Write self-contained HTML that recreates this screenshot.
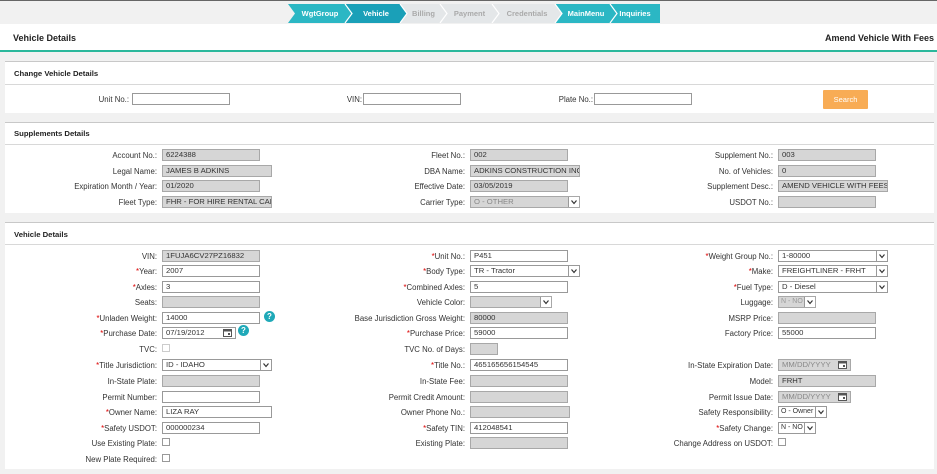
<!DOCTYPE html>
<html><head><meta charset="utf-8"><style>
*{box-sizing:border-box;margin:0;padding:0}
body{width:937px;height:474px;overflow:hidden;background:#f1f1f1;font-family:"Liberation Sans",sans-serif;font-size:8px;color:#333;position:relative}
.a{position:absolute}
.seg{position:absolute;top:4px;height:19px;line-height:19px;font-weight:bold;font-size:7.5px;color:#fff;text-align:center;clip-path:polygon(0 0,calc(100% - 7px) 0,100% 50%,calc(100% - 7px) 100%,0 100%,7px 50%)}
.g{background:#e4e7e9;color:#aaa}
.t{background:#2bb7c4}
.d{background:#1aa0b8}
.panel{position:absolute;left:5px;width:929px;background:#fff;border-top:1px solid #c8c8c8}
.hd{position:absolute;left:9px;font-weight:bold;font-size:7.7px;color:#222}
.sep{position:absolute;left:0;width:100%;height:1px;background:#d8d8d8}
.lb{position:absolute;text-align:right;white-space:nowrap;font-size:7.8px;color:#333}
.in{position:absolute;height:12px;border:1px solid #999;background:#fff;font-size:7.7px;line-height:10px;padding-left:3px;white-space:nowrap;overflow:hidden;color:#333}
.gr{background:#d6d6d6;border-color:#a8a8a8}
.sel{padding-right:11px}
.sel::after{content:"";position:absolute;right:0;top:0;width:10px;height:10px;border-left:1px solid #999;background:#fff}
.chev{position:absolute;right:2px;top:2px;width:6px;height:6px;z-index:2}
.r{color:#d00}
.cb{position:absolute;width:8px;height:8px;border:1px solid #999;background:#fff}
.q{position:absolute;width:11px;height:11px;border-radius:50%;background:#1fa9b8;color:#fff;font-weight:bold;font-size:8px;line-height:11px;text-align:center}
.cal{position:absolute;width:9px;height:9px}
</style></head><body>
<div class="a" style="left:0;top:0;width:937px;height:1px;background:#666"></div>
<div class="seg t" style="left:288px;width:64px">WgtGroup</div>
<div class="seg d" style="left:345px;width:62px">Vehicle</div>
<div class="seg g" style="left:400px;width:47px">Billing</div>
<div class="seg g" style="left:440px;width:59px">Payment</div>
<div class="seg g" style="left:492px;width:70px">Credentials</div>
<div class="seg t" style="left:555px;width:62px">MainMenu</div>
<div class="seg t" style="left:610px;width:50px;clip-path:polygon(0 0,100% 0,100% 100%,0 100%,7px 50%)">Inquiries</div>
<svg class="a" style="left:280px;top:4px" width="400" height="19"><g stroke="#fff" stroke-width="1.2" fill="none"><path d="M65 0L72 9.5L65 19"/><path d="M120 0L127 9.5L120 19"/><path d="M160 0L167 9.5L160 19"/><path d="M212 0L219 9.5L212 19"/><path d="M275 0L282 9.5L275 19"/><path d="M330 0L337 9.5L330 19"/></g></svg>
<div class="a" style="left:0;top:24px;width:937px;height:26px;background:#fff"></div>
<div class="a" style="left:13px;top:33px;font-weight:bold;font-size:9px;color:#222">Vehicle Details</div>
<div class="a" style="right:3px;top:33px;font-weight:bold;font-size:9px;color:#222">Amend Vehicle With Fees</div>
<div class="a" style="left:0;top:50px;width:937px;height:2px;background:#2bb89c"></div>

<div class="panel" style="top:61px;height:52px">
<div class="hd" style="top:7px">Change Vehicle Details</div>
<div class="sep" style="top:22px"></div>
<div class="lb" style="left:0;width:124px;top:33px">Unit No.:</div>
<div class="in" style="left:127px;top:31px;width:98px"></div>
<div class="lb" style="left:300px;width:57px;top:33px">VIN:</div>
<div class="in" style="left:358px;top:31px;width:98px"></div>
<div class="lb" style="left:500px;width:88px;top:33px">Plate No.:</div>
<div class="in" style="left:589px;top:31px;width:98px"></div>
<div class="a" style="left:818px;top:28px;width:45px;height:19px;background:#f8ac55;color:#fff;text-align:center;line-height:19px;font-size:7.5px;border-radius:1px">Search</div>
</div>

<div class="panel" style="top:122px;height:91px">
<div class="hd" style="top:6px">Supplements Details</div>
<div class="sep" style="top:21px"></div>
</div>
<div class="lb" style="left:0;width:157px;top:151px">Account No.:</div><div class="in gr" style="left:162px;top:149px;width:98px">6224388</div>
<div class="lb" style="left:0;width:157px;top:167px">Legal Name:</div><div class="in gr" style="left:162px;top:165px;width:110px">JAMES B ADKINS</div>
<div class="lb" style="left:0;width:157px;top:182px">Expiration Month / Year:</div><div class="in gr" style="left:162px;top:180px;width:98px">01/2020</div>
<div class="lb" style="left:0;width:157px;top:198px">Fleet Type:</div><div class="in gr" style="left:162px;top:196px;width:110px">FHR - FOR HIRE RENTAL CARRIE</div>
<div class="lb" style="left:300px;width:165px;top:151px">Fleet No.:</div><div class="in gr" style="left:470px;top:149px;width:98px">002</div>
<div class="lb" style="left:300px;width:165px;top:167px">DBA Name:</div><div class="in gr" style="left:470px;top:165px;width:110px">ADKINS CONSTRUCTION INC</div>
<div class="lb" style="left:300px;width:165px;top:182px">Effective Date:</div><div class="in gr" style="left:470px;top:180px;width:98px">03/05/2019</div>
<div class="lb" style="left:300px;width:165px;top:198px">Carrier Type:</div><div class="in gr sel" style="left:470px;top:196px;width:110px;color:#888">O - OTHER<svg class="chev" viewBox="0 0 6 6"><path d="M0.5 1.5L3 4.5L5.5 1.5" stroke="#333" fill="none" stroke-width="1.2"/></svg></div>
<div class="lb" style="left:600px;width:173px;top:151px">Supplement No.:</div><div class="in gr" style="left:778px;top:149px;width:98px">003</div>
<div class="lb" style="left:600px;width:173px;top:167px">No. of Vehicles:</div><div class="in gr" style="left:778px;top:165px;width:98px">0</div>
<div class="lb" style="left:600px;width:173px;top:182px">Supplement Desc.:</div><div class="in gr" style="left:778px;top:180px;width:110px">AMEND VEHICLE WITH FEES</div>
<div class="lb" style="left:600px;width:173px;top:198px">USDOT No.:</div><div class="in gr" style="left:778px;top:196px;width:98px"></div>

<div class="panel" style="top:222px;height:247px">
<div class="hd" style="top:7px">Vehicle Details</div>
<div class="sep" style="top:21px"></div>
</div>
<div class="lb" style="left:0;width:157px;top:252px">VIN:</div><div class="in gr" style="left:162px;top:250px;width:98px">1FUJA6CV27PZ16832</div>
<div class="lb" style="left:0;width:157px;top:267px"><span class="r">*</span>Year:</div><div class="in" style="left:162px;top:265px;width:98px">2007</div>
<div class="lb" style="left:0;width:157px;top:283px"><span class="r">*</span>Axles:</div><div class="in" style="left:162px;top:281px;width:98px">3</div>
<div class="lb" style="left:0;width:157px;top:298px">Seats:</div><div class="in gr" style="left:162px;top:296px;width:98px"></div>
<div class="lb" style="left:0;width:157px;top:314px"><span class="r">*</span>Unladen Weight:</div><div class="in" style="left:162px;top:312px;width:98px">14000</div><div class="q" style="left:264px;top:311px">?</div>
<div class="lb" style="left:0;width:157px;top:329px"><span class="r">*</span>Purchase Date:</div><div class="in" style="left:162px;top:327px;width:74px">07/19/2012</div>
<svg class="cal" style="left:223px;top:328px" viewBox="0 0 9 9"><rect x="0.5" y="1.5" width="8" height="7" fill="#fff" stroke="#555"/><rect x="0.5" y="1.5" width="8" height="2" fill="#555"/><rect x="5" y="5" width="2" height="2" fill="#555"/></svg>
<div class="q" style="left:238px;top:325px">?</div>
<div class="lb" style="left:0;width:157px;top:345px">TVC:</div><div class="cb" style="left:162px;top:344px;border-color:#ccc"></div>
<div class="lb" style="left:0;width:157px;top:361px"><span class="r">*</span>Title Jurisdiction:</div><div class="in sel" style="left:162px;top:359px;width:110px">ID - IDAHO<svg class="chev" viewBox="0 0 6 6"><path d="M0.5 1.5L3 4.5L5.5 1.5" stroke="#333" fill="none" stroke-width="1.2"/></svg></div>
<div class="lb" style="left:0;width:157px;top:377px">In-State Plate:</div><div class="in gr" style="left:162px;top:375px;width:98px"></div>
<div class="lb" style="left:0;width:157px;top:393px">Permit Number:</div><div class="in" style="left:162px;top:391px;width:98px"></div>
<div class="lb" style="left:0;width:157px;top:408px"><span class="r">*</span>Owner Name:</div><div class="in" style="left:162px;top:406px;width:110px">LIZA RAY</div>
<div class="lb" style="left:0;width:157px;top:424px"><span class="r">*</span>Safety USDOT:</div><div class="in" style="left:162px;top:422px;width:98px">000000234</div>
<div class="lb" style="left:0;width:157px;top:439px">Use Existing Plate:</div><div class="cb" style="left:162px;top:438px"></div>
<div class="lb" style="left:0;width:157px;top:455px">New Plate Required:</div><div class="cb" style="left:162px;top:454px"></div>

<div class="lb" style="left:300px;width:165px;top:252px"><span class="r">*</span>Unit No.:</div><div class="in" style="left:470px;top:250px;width:98px">P451</div>
<div class="lb" style="left:300px;width:165px;top:267px"><span class="r">*</span>Body Type:</div><div class="in sel" style="left:470px;top:265px;width:110px">TR - Tractor<svg class="chev" viewBox="0 0 6 6"><path d="M0.5 1.5L3 4.5L5.5 1.5" stroke="#333" fill="none" stroke-width="1.2"/></svg></div>
<div class="lb" style="left:300px;width:165px;top:283px"><span class="r">*</span>Combined Axles:</div><div class="in" style="left:470px;top:281px;width:98px">5</div>
<div class="lb" style="left:300px;width:165px;top:298px">Vehicle Color:</div><div class="in gr sel" style="left:470px;top:296px;width:82px"><svg class="chev" viewBox="0 0 6 6"><path d="M0.5 1.5L3 4.5L5.5 1.5" stroke="#333" fill="none" stroke-width="1.2"/></svg></div>
<div class="lb" style="left:300px;width:165px;top:314px">Base Jurisdiction Gross Weight:</div><div class="in gr" style="left:470px;top:312px;width:98px">80000</div>
<div class="lb" style="left:300px;width:165px;top:329px"><span class="r">*</span>Purchase Price:</div><div class="in" style="left:470px;top:327px;width:98px">59000</div>
<div class="lb" style="left:300px;width:165px;top:345px">TVC No. of Days:</div><div class="in gr" style="left:470px;top:343px;width:28px"></div>
<div class="lb" style="left:300px;width:165px;top:361px"><span class="r">*</span>Title No.:</div><div class="in" style="left:470px;top:359px;width:98px">465165656154545</div>
<div class="lb" style="left:300px;width:165px;top:377px">In-State Fee:</div><div class="in gr" style="left:470px;top:375px;width:98px"></div>
<div class="lb" style="left:300px;width:165px;top:393px">Permit Credit Amount:</div><div class="in gr" style="left:470px;top:391px;width:98px"></div>
<div class="lb" style="left:300px;width:165px;top:408px">Owner Phone No.:</div><div class="in gr" style="left:470px;top:406px;width:100px"></div>
<div class="lb" style="left:300px;width:165px;top:424px"><span class="r">*</span>Safety TIN:</div><div class="in" style="left:470px;top:422px;width:98px">412048541</div>
<div class="lb" style="left:300px;width:165px;top:439px">Existing Plate:</div><div class="in gr" style="left:470px;top:437px;width:98px"></div>

<div class="lb" style="left:600px;width:173px;top:252px"><span class="r">*</span>Weight Group No.:</div><div class="in sel" style="left:778px;top:250px;width:110px">1-80000<svg class="chev" viewBox="0 0 6 6"><path d="M0.5 1.5L3 4.5L5.5 1.5" stroke="#333" fill="none" stroke-width="1.2"/></svg></div>
<div class="lb" style="left:600px;width:173px;top:267px"><span class="r">*</span>Make:</div><div class="in sel" style="left:778px;top:265px;width:110px">FREIGHTLINER - FRHT<svg class="chev" viewBox="0 0 6 6"><path d="M0.5 1.5L3 4.5L5.5 1.5" stroke="#333" fill="none" stroke-width="1.2"/></svg></div>
<div class="lb" style="left:600px;width:173px;top:283px"><span class="r">*</span>Fuel Type:</div><div class="in sel" style="left:778px;top:281px;width:110px">D - Diesel<svg class="chev" viewBox="0 0 6 6"><path d="M0.5 1.5L3 4.5L5.5 1.5" stroke="#333" fill="none" stroke-width="1.2"/></svg></div>
<div class="lb" style="left:600px;width:173px;top:298px">Luggage:</div><div class="in gr sel" style="left:778px;top:296px;width:38px;color:#999;padding-left:2px;font-size:7px">N - NO<svg class="chev" viewBox="0 0 6 6"><path d="M0.5 1.5L3 4.5L5.5 1.5" stroke="#333" fill="none" stroke-width="1.2"/></svg></div>
<div class="lb" style="left:600px;width:173px;top:314px">MSRP Price:</div><div class="in gr" style="left:778px;top:312px;width:98px"></div>
<div class="lb" style="left:600px;width:173px;top:329px">Factory Price:</div><div class="in" style="left:778px;top:327px;width:98px">55000</div>
<div class="lb" style="left:600px;width:173px;top:361px">In-State Expiration Date:</div><div class="in gr" style="left:778px;top:359px;width:73px;color:#888">MM/DD/YYYY</div>
<svg class="cal" style="left:838px;top:360px" viewBox="0 0 9 9"><rect x="0.5" y="1.5" width="8" height="7" fill="#fff" stroke="#555"/><rect x="0.5" y="1.5" width="8" height="2" fill="#555"/><rect x="5" y="5" width="2" height="2" fill="#555"/></svg>
<div class="lb" style="left:600px;width:173px;top:377px">Model:</div><div class="in gr" style="left:778px;top:375px;width:98px">FRHT</div>
<div class="lb" style="left:600px;width:173px;top:393px">Permit Issue Date:</div><div class="in gr" style="left:778px;top:391px;width:73px;color:#888">MM/DD/YYYY</div>
<svg class="cal" style="left:838px;top:392px" viewBox="0 0 9 9"><rect x="0.5" y="1.5" width="8" height="7" fill="#fff" stroke="#555"/><rect x="0.5" y="1.5" width="8" height="2" fill="#555"/><rect x="5" y="5" width="2" height="2" fill="#555"/></svg>
<div class="lb" style="left:600px;width:173px;top:408px">Safety Responsibility:</div><div class="in sel" style="left:778px;top:406px;width:49px;padding-left:2px;font-size:7px">O - Owner<svg class="chev" viewBox="0 0 6 6"><path d="M0.5 1.5L3 4.5L5.5 1.5" stroke="#333" fill="none" stroke-width="1.2"/></svg></div>
<div class="lb" style="left:600px;width:173px;top:424px"><span class="r">*</span>Safety Change:</div><div class="in sel" style="left:778px;top:422px;width:38px;padding-left:2px;font-size:7px">N - NO<svg class="chev" viewBox="0 0 6 6"><path d="M0.5 1.5L3 4.5L5.5 1.5" stroke="#333" fill="none" stroke-width="1.2"/></svg></div>
<div class="lb" style="left:600px;width:173px;top:439px">Change Address on USDOT:</div><div class="cb" style="left:778px;top:438px"></div>
</body></html>
